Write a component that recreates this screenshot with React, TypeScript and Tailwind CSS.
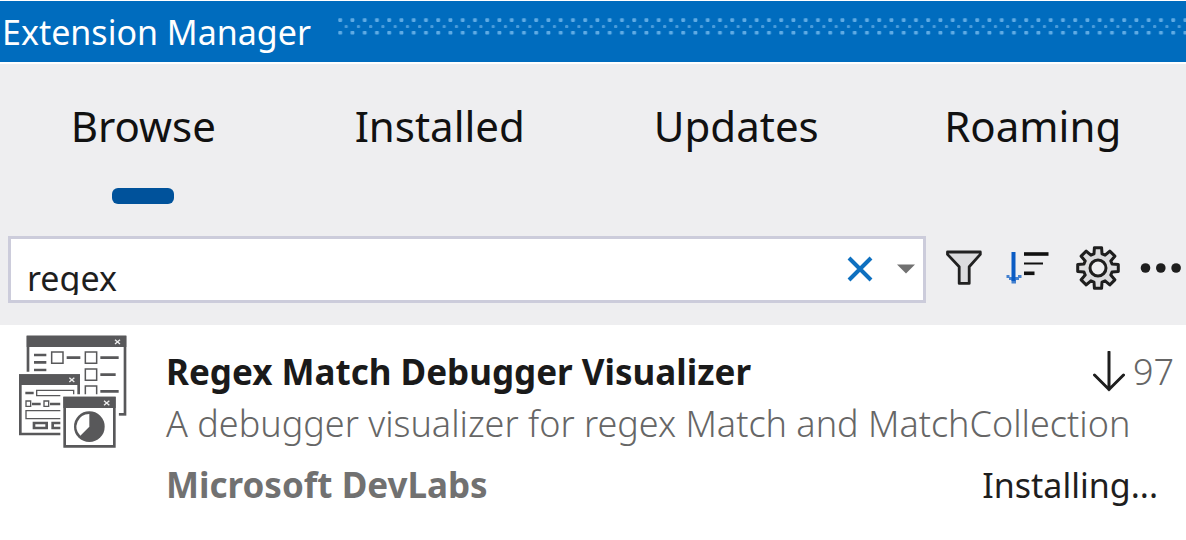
import { useState } from "react";

const TABS = ["Browse", "Installed", "Updates", "Roaming"];

function TitleBar() {
  return (
    <header className="mt-px flex h-[61px] items-center bg-[#006cbe] pl-0.5 text-white">
      <h1 className="text-[34px] leading-[60px] whitespace-nowrap">Extension Manager</h1>
      <svg aria-hidden="true" className="mt-[17px] ml-[27px] h-[18px] min-w-0 flex-1 self-start">
        <defs>
          <pattern id="grip" width="12.25" height="18" patternUnits="userSpaceOnUse">
            <rect x="0.3" y="0.3" width="3.8" height="3.6" rx="0.8" fill="#5fabe4" />
            <rect x="6.6" y="6.9" width="3.2" height="3.2" rx="1.2" fill="#4a9cdb" />
            <rect x="0.3" y="13" width="3.8" height="3.6" rx="0.8" fill="#5fabe4" />
          </pattern>
        </defs>
        <rect width="100%" height="18" fill="url(#grip)" />
      </svg>
    </header>
  );
}

function FunnelIcon() {
  return (
    <svg aria-hidden="true" viewBox="0 0 36 36" className="h-9 w-9">
      <path d="M1.5 2H34.3V4.4L23.2 16.8V33.4H13.2V16.8L1.5 4.4Z" fill="#dcdcde" stroke="#212121" strokeWidth="2.8" strokeLinejoin="round" />
    </svg>
  );
}

function SortIcon() {
  return (
    <svg aria-hidden="true" viewBox="0 0 44 36" className="h-9 w-11">
      <path d="M7.5 2V31" stroke="#0a5bc4" strokeWidth="4" />
      <path d="M0.5 25H3.5V27H12V25H15.5V28H13V30H10V33.5H5.5V30H3V28H0.5Z" fill="#0a5bc4" fillOpacity="0.75" />
      <path d="M18 4H42.500" stroke="#111" strokeWidth="3.6" />
      <path d="M18 13.500H37" stroke="#111" strokeWidth="2" />
      <path d="M18 23.300H28.500" stroke="#111" strokeWidth="3.6" />
    </svg>
  );
}

const gearPath = (() => {
  const points: string[] = [];
  const profile: [number, number][] = [
    [-16, 14.6],
    [-10, 20.6],
    [10, 20.6],
    [16, 14.6],
  ];
  for (let tooth = 0; tooth < 8; tooth++) {
    for (const [offset, radius] of profile) {
      const angle = ((tooth * 45 + offset) * Math.PI) / 180;
      points.push(`${(22 + radius * Math.sin(angle)).toFixed(2)} ${(22 - radius * Math.cos(angle)).toFixed(2)}`);
    }
  }
  return `M${points.join("L")}Z`;
})();

function GearIcon() {
  return (
    <svg aria-hidden="true" viewBox="0 0 44 44" className="h-11 w-11">
      <path d={gearPath} fill="#dcdcde" stroke="#1e1e1e" strokeWidth="3" strokeLinejoin="round" />
      <circle cx="22" cy="22" r="8" fill="#eeeef0" stroke="#1e1e1e" strokeWidth="3" />
    </svg>
  );
}

function MoreIcon() {
  return (
    <svg aria-hidden="true" viewBox="0 0 42 12" className="h-3 w-[42px]" fill="#1e1e1e">
      <circle cx="5.500" cy="6" r="4.800" />
      <circle cx="20.800" cy="6" r="4.800" />
      <circle cx="36.100" cy="6" r="4.800" />
    </svg>
  );
}

function VisualizerIcon() {
  return (
    <svg aria-hidden="true" viewBox="24 30 330 345" className="h-[115px] w-[110px]" fill="none" stroke="#58585a">
      <rect x="54" y="36" width="291" height="232" fill="#fff" strokeWidth="8" />
      <path d="M50 32H349V66H50Z" fill="#58585a" stroke="none" />
      <path d="M315 44L330 57M330 44L315 57" stroke="#eee" strokeWidth="4" />
      <path d="M72 90H109M72 112H109M72 135H109M170 98H211M271 98H326M271 149H317M271 199H326" strokeWidth="8" />
      <path d="M125 81H159V115H125ZM226 81H260V115H226ZM226 132H260V166H226ZM226 183H260V217H226Z" strokeWidth="4.500" />
      <path d="M20 140H217V340H20Z" fill="#fff" stroke="none" />
      <path d="M217 211H326V275H217Z" fill="#fff" stroke="none" />
      <path d="M31 152H206V327H31Z" fill="#fff" strokeWidth="8" />
      <path d="M27 148H210V180H27Z" fill="#58585a" stroke="none" />
      <path d="M178 158L193 171M193 158L178 171" stroke="#eee" strokeWidth="4" />
      <path d="M46 204H71M66 237H92M120 237H152" strokeWidth="7" />
      <path d="M80 196H191V212H80ZM48 228H62V244H48ZM102 228H116V244H102ZM48 257H191V281H48Z" strokeWidth="4" />
      <path d="M72 294H110V309H72ZM128 294H166V309H128Z" strokeWidth="8" />
      <path d="M151 208H326V378H151Z" fill="#fff" stroke="none" />
      <path d="M164 219H313V364H164Z" fill="#fff" strokeWidth="8" />
      <path d="M160 215H317V249H160Z" fill="#58585a" stroke="none" />
      <path d="M282 227L298 241M298 227L282 241" stroke="#eee" strokeWidth="4" />
      <circle cx="238" cy="305" r="46" fill="#58585a" stroke="none" />
      <path d="M238 305V267A38 38 0 0 0 211 332Z" fill="#fff" stroke="none" />
    </svg>
  );
}

function SearchRow() {
  const [query, setQuery] = useState("regex");
  return (
    <div className="flex items-center pl-2">
      <div className="flex h-[67px] min-w-0 flex-1 items-start border-[3px] border-[#ccccdb] bg-white">
        <div className="mt-3 ml-4 h-11 min-w-0 flex-1 overflow-hidden">
          <input
            aria-label="Search extensions"
            type="text"
            value={query}
            onChange={(e) => setQuery(e.target.value)}
            className="block h-[54px] w-full bg-transparent text-[34px] leading-[54px] text-[#1e1e1e] outline-none"
          />
        </div>
        <div className="flex items-center gap-6 self-center pr-2 pb-0.5">
          <button type="button" aria-label="Clear search" onClick={() => setQuery("")}>
            <svg aria-hidden="true" viewBox="0 0 26 26" className="h-[26px] w-[26px]">
              <path d="M2 2L24 24M24 2L2 24" stroke="#0e70c0" strokeWidth="4" />
            </svg>
          </button>
          <button type="button" aria-label="Search history">
            <svg aria-hidden="true" viewBox="0 0 18 10" className="h-2.5 w-[18px]">
              <path d="M0 0.500H18L9 9.500Z" fill="#717171" />
            </svg>
          </button>
        </div>
      </div>
      <div className="flex items-center pb-1 pl-5">
        <button type="button" aria-label="Filter"><FunnelIcon /></button>
        <button type="button" aria-label="Sort" className="ml-6"><SortIcon /></button>
        <button type="button" aria-label="Settings" className="ml-[26px]"><GearIcon /></button>
        <button type="button" aria-label="More options" className="mr-1 ml-5"><MoreIcon /></button>
      </div>
    </div>
  );
}

function ExtensionItem() {
  return (
    <article className="flex pt-2.5 pl-[18px]">
      <VisualizerIcon />
      <div className="min-w-0 flex-1 pt-[11px] pl-[38px]">
        <div className="flex h-[52px] items-center justify-between pr-3">
          <h2 className="text-[35px] leading-[52px] font-bold whitespace-nowrap text-[#1a1a1a]">Regex Match Debugger Visualizer</h2>
          <p className="flex items-center gap-2 text-[36px] leading-[52px] font-light text-[#666]">
            <svg aria-hidden="true" viewBox="0 0 34 42" className="h-[42px] w-[34px]" fill="none" stroke="#1e1e1e" strokeWidth="3" strokeLinecap="round">
              <path d="M18 1V38.500M3.500 24L18 38.500L32.500 24" />
            </svg>
            97
          </p>
        </div>
        <p className="text-[36px] leading-[52px] font-light whitespace-nowrap text-[#666]">
          A debugger visualizer for regex Match and MatchCollection
        </p>
        <div className="mt-[9px] flex justify-between pr-7 leading-[52px]">
          <p className="text-[35px] font-bold text-[#717171]">Microsoft DevLabs</p>
          <p className="text-[34px] text-[#1e1e1e]">Installing...</p>
        </div>
      </div>
    </article>
  );
}

export default function App() {
  const [active, setActive] = useState("Browse");
  return (
    <main className="min-h-screen overflow-x-hidden bg-white font-['Noto_Sans',sans-serif]">
      <TitleBar />
      <section className="mt-0.5 bg-[#eeeef0] pb-[22px]">
        <div role="tablist" className="-ml-[5px] mr-[5px] grid grid-cols-4 pt-[30px]">
          {TABS.map((tab) => (
            <button
              key={tab}
              type="button"
              role="tab"
              aria-selected={active === tab}
              onClick={() => setActive(tab)}
              className="flex h-[142px] flex-col items-center text-[42px] leading-[64px] text-[#111]"
            >
              {tab}
              {active === tab && <span className="mt-[30px] h-4 w-[62px] rounded-md bg-[#00529b]" />}
            </button>
          ))}
        </div>
        <SearchRow />
      </section>
      <ExtensionItem />
    </main>
  );
}
